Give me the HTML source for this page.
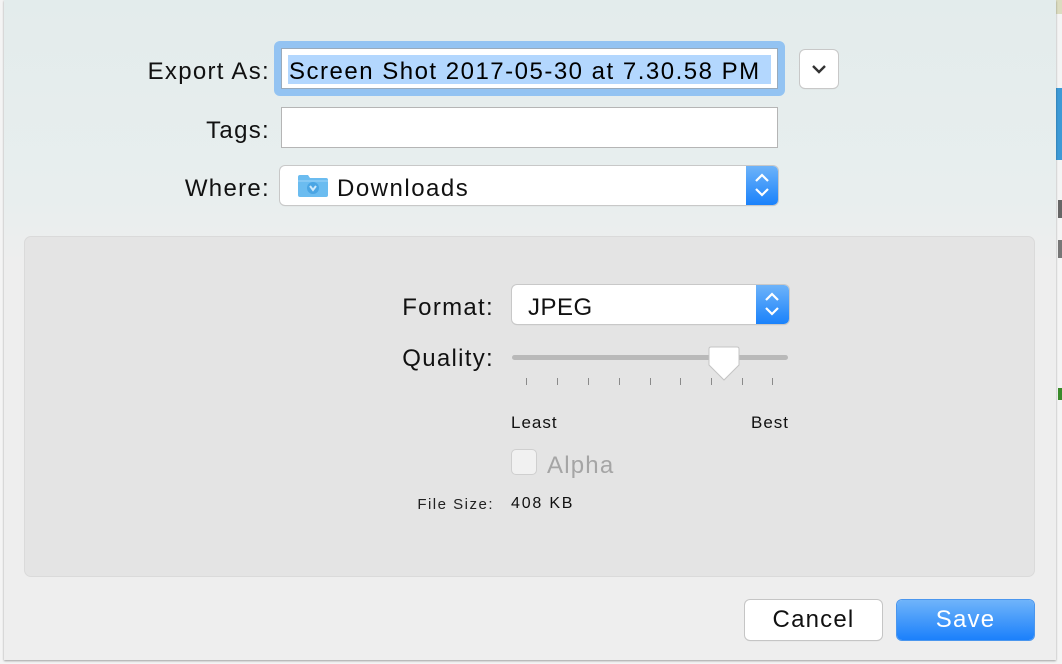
<!DOCTYPE html>
<html><head><style>
*{box-sizing:border-box;margin:0;padding:0}
body{width:1062px;height:664px;overflow:hidden;background:#f4f4f4;font-family:"Liberation Sans",sans-serif;position:relative}
.a{position:absolute}
.dlg{left:4px;top:0;width:1052px;height:660px;background:linear-gradient(180deg,#e3ecec 0%,#e8eeee 30%,#eeeeee 40%,#eeeeee 100%);box-shadow:0 1px 2px rgba(0,0,0,.35)}
.lbl{font-size:24px;color:#111;text-align:right;white-space:nowrap;letter-spacing:1.3px}
.fld{background:#fff;border:1px solid #b5b5b5}
.pop{background:#fff;border-radius:5px;box-shadow:0 0 0 1px #c8c8c8,0 1px 1px rgba(0,0,0,.15)}
.blue{background:linear-gradient(#6db3f9,#1a82fb);border-radius:0 5px 5px 0}
.tick{width:1px;height:7px;background:#8a8a8a;top:378px}
.btn{border-radius:5px;font-size:24px;text-align:center;line-height:39px;letter-spacing:1.2px}
</style></head><body>
<div class="a" style="left:1056px;top:0;width:6px;height:14px;background:#dcdcc0"></div>
<div class="a" style="left:1056px;top:88px;width:6px;height:72px;background:#3d9ad6"></div>
<div class="a" style="left:1058px;top:200px;width:4px;height:18px;background:#666"></div>
<div class="a" style="left:1058px;top:240px;width:4px;height:18px;background:#777"></div>
<div class="a" style="left:1058px;top:388px;width:4px;height:12px;background:#3a8a2a"></div>
<div class="a dlg"></div>

<div class="a lbl" style="right:792px;top:58px">Export As:</div>
<div class="a" style="left:274px;top:41px;width:511px;height:55px;background:#93c3f2;border-radius:6px"></div>
<div class="a fld" style="left:281px;top:48px;width:497px;height:41px;border-color:#9ab"></div>
<div class="a" style="left:288px;top:55px;width:483px;height:29px;background:#b3d7fe"></div>
<div class="a" style="left:289px;top:58px;font-size:24px;color:#000;white-space:nowrap;letter-spacing:1.5px">Screen Shot 2017-05-30 at 7.30.58 PM</div>
<div class="a pop" style="left:800px;top:50px;width:38px;height:38px"></div>
<svg class="a" style="left:811px;top:63px" width="16" height="12"><path d="M2 3 L8 9 L14 3" stroke="#333" stroke-width="2.4" fill="none"/></svg>

<div class="a lbl" style="right:792px;top:117px">Tags:</div>
<div class="a fld" style="left:281px;top:107px;width:497px;height:41px"></div>

<div class="a lbl" style="right:792px;top:175px">Where:</div>
<div class="a pop" style="left:280px;top:166px;width:498px;height:39px"></div>
<div class="a blue" style="left:746px;top:166px;width:32px;height:39px"></div>
<svg class="a" style="left:752px;top:172px" width="20" height="28"><path d="M4 9 L10 3 L16 9 M4 17 L10 23 L16 17" stroke="#fff" stroke-width="2.2" fill="none"/></svg>
<svg class="a" style="left:297px;top:174px" width="32" height="24"><path d="M1 3 Q1 1 3 1 H11 L13 4 H29 Q31 4 31 6 V21 Q31 23 29 23 H3 Q1 23 1 21 Z" fill="#6bbcf0"/><path d="M1 7 H31" stroke="#9fd4f7" stroke-width="1"/><circle cx="16" cy="14" r="6" fill="#4aa5e4"/><path d="M13 12 L16 16 L19 12" stroke="#cfe9fb" stroke-width="2" fill="none"/></svg>
<div class="a" style="left:337px;top:175px;font-size:24px;color:#111;letter-spacing:1.5px">Downloads</div>

<div class="a" style="left:24px;top:236px;width:1011px;height:341px;background:#e4e4e4;border:1px solid #dadada;border-radius:7px"></div>

<div class="a lbl" style="right:568px;top:294px">Format:</div>
<div class="a pop" style="left:512px;top:285px;width:277px;height:39px"></div>
<div class="a blue" style="left:756px;top:285px;width:33px;height:39px"></div>
<svg class="a" style="left:762px;top:291px" width="20" height="28"><path d="M4 9 L10 3 L16 9 M4 17 L10 23 L16 17" stroke="#fff" stroke-width="2.2" fill="none"/></svg>
<div class="a" style="left:528px;top:294px;font-size:24px;color:#111;letter-spacing:0.5px">JPEG</div>

<div class="a lbl" style="right:568px;top:345px">Quality:</div>
<div class="a" style="left:512px;top:355px;width:276px;height:5px;background:#b9b9b9;border-radius:3px"></div>
<div class="a tick" style="left:526px"></div><div class="a tick" style="left:557px"></div><div class="a tick" style="left:588px"></div><div class="a tick" style="left:619px"></div><div class="a tick" style="left:650px"></div><div class="a tick" style="left:680px"></div><div class="a tick" style="left:711px"></div><div class="a tick" style="left:742px"></div><div class="a tick" style="left:772px"></div>
<svg class="a" style="left:707px;top:345px" width="34" height="38"><path d="M4 2 H30 Q32 2 32 4 V20 L17 35 L2 20 V4 Q2 2 4 2 Z" fill="#fff" stroke="#c4c4c4" stroke-width="1"/></svg>

<div class="a" style="left:511px;top:413px;font-size:17px;color:#111;letter-spacing:1px">Least</div>
<div class="a" style="left:751px;top:413px;font-size:17px;color:#111;letter-spacing:1px">Best</div>

<div class="a" style="left:511px;top:449px;width:26px;height:26px;background:#f1f1f1;border:1px solid #cfcfcf;border-radius:5px"></div>
<div class="a" style="left:547px;top:452px;font-size:24px;color:#a5a5a5;letter-spacing:1.2px">Alpha</div>

<div class="a" style="right:568px;top:496px;font-size:15px;color:#222;letter-spacing:1.5px">File Size:</div>
<div class="a" style="left:511px;top:495px;font-size:16px;color:#111;letter-spacing:1.8px">408 KB</div>

<div class="a btn" style="left:745px;top:600px;width:137px;height:40px;background:#fff;box-shadow:0 0 0 1px #c5c5c5,0 1px 1px rgba(0,0,0,.15);color:#111">Cancel</div>
<div class="a btn" style="left:897px;top:600px;width:137px;height:40px;background:linear-gradient(#6fb4fa,#1b80fb);color:#fff;box-shadow:0 0 0 1px #4a96ee">Save</div>
</body></html>
